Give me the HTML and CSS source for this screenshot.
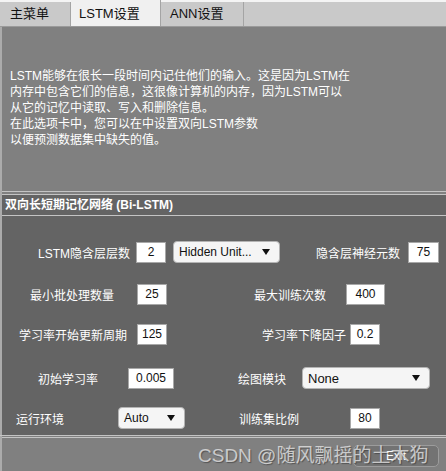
FILE: index.html
```html
<!DOCTYPE html>
<html lang="zh-CN">
<head>
    <meta charset="UTF-8">
    <meta name="viewport" content="width=device-width, initial-scale=1.0">
    <title>LSTM设置</title>
    <link rel="stylesheet" href="styles.css">
</head>
<body>
    <div class="tabs">
        <div class="tab tab-main">主菜单</div>
        <div class="tab tab-lstm active">LSTM设置</div>
        <div class="tab tab-ann">ANN设置</div>
    </div>

    <div class="tabpage">
        <div class="intro">
            <p>LSTM能够在很长一段时间内记住他们的输入。这是因为LSTM在</p>
            <p>内存中包含它们的信息，这很像计算机的内存，因为LSTM可以</p>
            <p>从它的记忆中读取、写入和删除信息。</p>
            <p>在此选项卡中，您可以在中设置双向LSTM参数</p>
            <p>以便预测数据集中缺失的值。</p>
        </div>

        <div class="group">
            <div class="group-title">双向长短期记忆网络 (Bi-LSTM)</div>
            <div class="group-body">
                <!-- row 1 -->
                <div class="row row-a">
                    <span class="lbl layers-lbl">LSTM隐含层层数</span>
                    <input class="num layers" value="2">
                    <div class="drop units">
                        <span>Hidden Unit...</span>
                        <svg width="8" height="6" viewBox="0 0 8 6"><polygon points="0,0 8,0 4,6" fill="#111"/></svg>
                    </div>
                    <span class="lbl neurons-lbl">隐含层神经元数</span>
                    <input class="num neurons" value="75">
                </div>
                <!-- row 2 -->
                <div class="row row-b">
                    <span class="lbl batch-lbl">最小批处理数量</span>
                    <input class="num batch" value="25">
                    <span class="lbl epochs-lbl">最大训练次数</span>
                    <input class="num epochs" value="400">
                </div>
                <!-- row 3 -->
                <div class="row row-c">
                    <span class="lbl period-lbl">学习率开始更新周期</span>
                    <input class="num period" value="125">
                    <span class="lbl drop-lbl">学习率下降因子</span>
                    <input class="num dropf" value="0.2">
                </div>
                <!-- row 4 -->
                <div class="row row-b">
                    <span class="lbl rate-lbl">初始学习率</span>
                    <input class="num rate" value="0.005">
                    <span class="lbl plot-lbl">绘图模块</span>
                    <div class="drop plot">
                        <span class="big">None</span>
                        <svg width="8" height="6" viewBox="0 0 8 6"><polygon points="0,0 8,0 4,6" fill="#111"/></svg>
                    </div>
                </div>
                <!-- row 5 -->
                <div class="row">
                    <span class="lbl env-lbl">运行环境</span>
                    <div class="drop env">
                        <span>Auto</span>
                        <svg width="8" height="6" viewBox="0 0 8 6"><polygon points="0,0 8,0 4,6" fill="#111"/></svg>
                    </div>
                    <span class="lbl ratio-lbl">训练集比例</span>
                    <input class="num ratio" value="80">
                </div>
            </div>
        </div>

        <div class="footer">
            <button class="exit">Exit</button>
            <div class="watermark">CSDN @随风飘摇的土木狗</div>
        </div>
    </div>
</body>
</html>
```

FILE: styles.css
```css
body {
    margin: 0;
    width: 446px;
    height: 471px;
    overflow: hidden;
    font-family: "Liberation Sans", "Noto Sans CJK SC", sans-serif;
    font-size: 12px;
    background: #808080;
}
.tabs {
    display: flex;
    height: 24px;
    padding-top: 2px;
    background: #c9c9c9;
    border-bottom: 1px solid #9a9a9a;
    box-shadow: inset 0 2px 0 #f4f4f4;
}
.tab {
    box-sizing: border-box;
    height: 24px;
    line-height: 24px;
    font-size: 13px;
    color: #111;
    border-right: 1px solid #a4a4a4;
    background: #c9c9c9;
}
.tab-main {
    width: 71px;
    padding-left: 10px;
}
.tab-lstm {
    width: 90px;
    padding-left: 8px;
}
.tab-ann {
    width: 83px;
    padding-left: 9px;
}
.tab.active {
    background: #f0f0f0;
    margin-top: -2px;
    height: 26px;
    line-height: 28px;
}
.tabpage {
    border-left: 2px solid #ababab;
    height: 444px;
    background: #808080;
}
.intro {
    height: 123px;
    padding: 41px 0 0 8px;
    border-bottom: 1px solid #c4c4c4;
    color: #fff;
}
.intro p {
    margin: 0;
    line-height: 16px;
}
.group {
    margin-top: 2px;
    border-top: 1px solid #c4c4c4;
    background: #646464;
}
.group-title {
    height: 20px;
    line-height: 20px;
    padding-left: 3px;
    font-weight: bold;
    color: #fff;
    border-bottom: 1px solid #c4c4c4;
}
.group-body {
    height: 194px;
    padding-top: 25px;
    border-bottom: 1px solid #c4c4c4;
    margin-left: -2px;
}
.row {
    display: flex;
    align-items: center;
    height: 22px;
}
.row-a {
    margin-bottom: 20px;
}
.row-b {
    margin-bottom: 18px;
}
.row-c {
    margin-bottom: 22px;
}
.lbl {
    flex: none;
    color: #fff;
    white-space: nowrap;
}
.num {
    flex: none;
    box-sizing: border-box;
    height: 21px;
    width: 30px;
    padding: 0;
    border: 1px solid #a8a8a8;
    background: #fff;
    color: #111;
    text-align: center;
    font-family: "Liberation Sans", sans-serif;
    font-size: 12px;
}
.drop {
    flex: none;
    box-sizing: border-box;
    height: 22px;
    display: flex;
    align-items: center;
    justify-content: space-between;
    padding: 0 9px 0 5px;
    background: #f5f5f5;
    border: 1px solid #b4b4b4;
    border-radius: 4px;
    color: #111;
}
.drop .big {
    font-size: 13px;
}

/* row 1 */
.layers-lbl { margin-left: 38px; width: 92px; }
.layers { margin-left: 6px; }
.units { margin-left: 7px; width: 107px; }
.neurons-lbl { margin-left: 36px; width: 86px; }
.neurons { margin-left: 6px; width: 31px; }
/* row 2 */
.batch-lbl { margin-left: 30px; width: 84px; }
.batch { margin-left: 23px; }
.epochs-lbl { margin-left: 87px; width: 73px; }
.epochs { margin-left: 19px; width: 39px; }
/* row 3 */
.period-lbl { margin-left: 19px; width: 108px; }
.period { margin-left: 10px; }
.drop-lbl { margin-left: 95px; width: 84px; }
.dropf { margin-left: 4px; }
/* row 4 */
.rate-lbl { margin-left: 38px; width: 60px; }
.rate { margin-left: 30px; width: 46px; }
.plot-lbl { margin-left: 64px; width: 48px; }
.plot { margin-left: 16px; width: 128px; }
/* row 5 */
.env-lbl { margin-left: 16px; width: 48px; }
.env { margin-left: 54px; width: 67px; }
.ratio-lbl { margin-left: 54px; width: 60px; }
.ratio { margin-left: 51px; }

.footer {
    margin-top: 1px;
    border-top: 1px solid #c4c4c4;
    height: 33px;
    position: relative;
}
.exit {
    position: absolute;
    left: 351px;
    top: 7px;
    width: 86px;
    height: 22px;
    border: 1px solid #9c9c9c;
    border-radius: 5px;
    background: #737373;
    color: #fff;
    font-family: "Liberation Sans", sans-serif;
    font-size: 12px;
}
.watermark {
    position: absolute;
    left: 196px;
    top: 2px;
    font-size: 19px;
    color: rgba(235, 235, 235, 0.75);
    text-shadow: 1px 1px 1px rgba(0, 0, 0, 0.35);
    white-space: nowrap;
    pointer-events: none;
}
```
